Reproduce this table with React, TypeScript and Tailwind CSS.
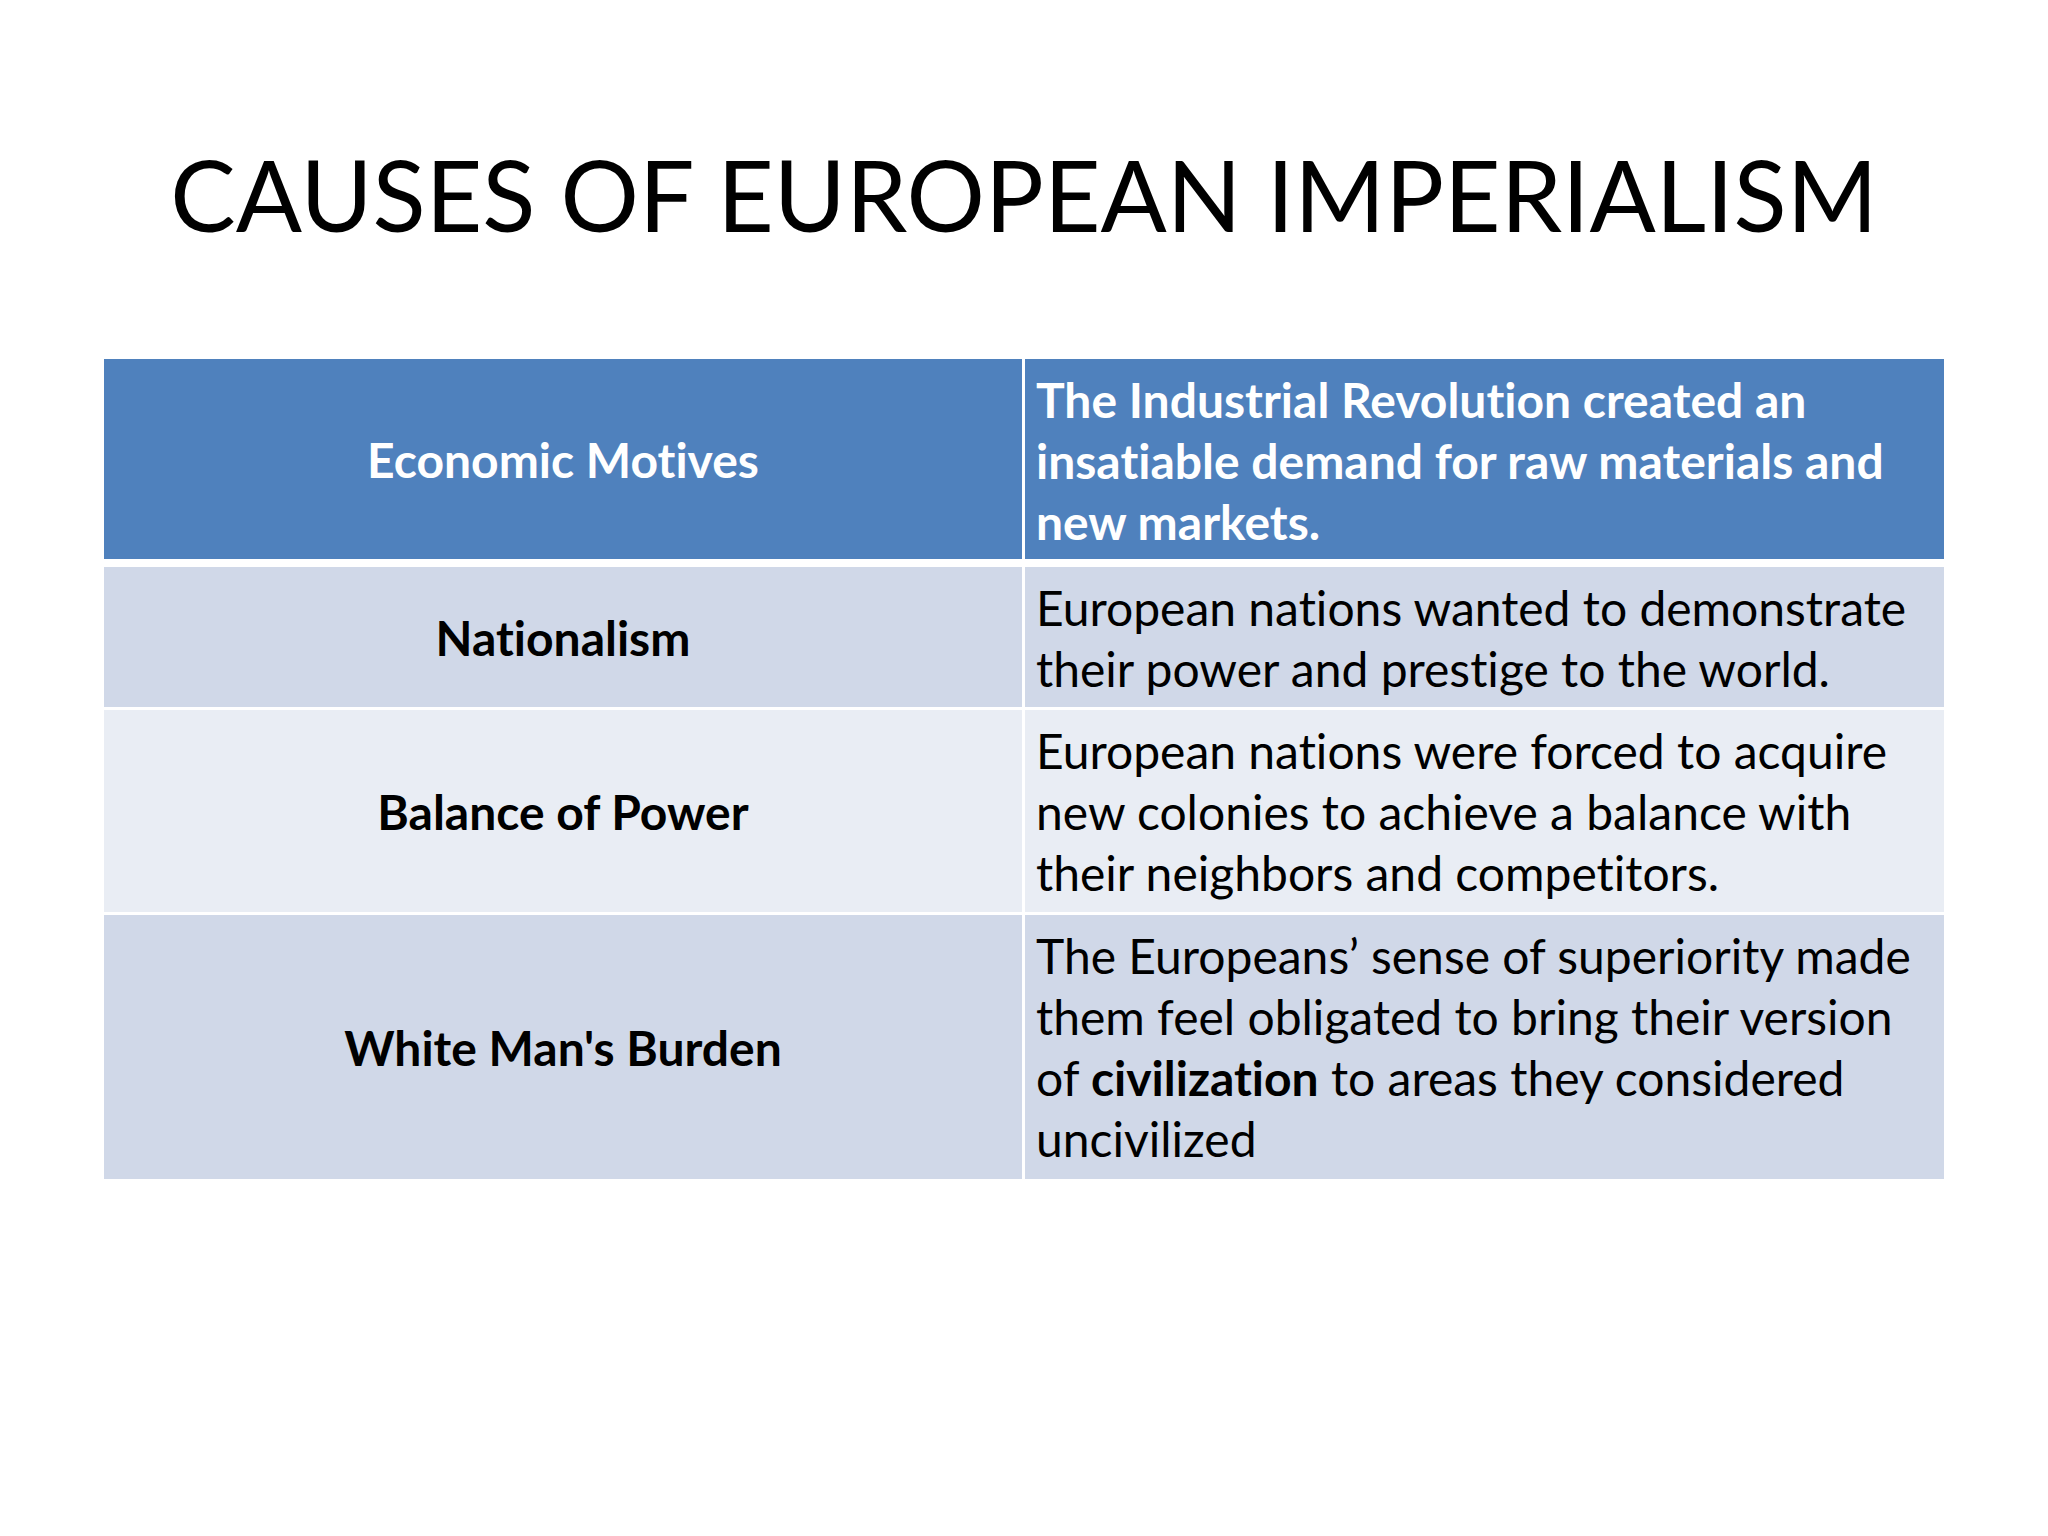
import React from "react";

export default function App() {
  const font = { fontFamily: "Lato, 'Open Sans', sans-serif" };
  return (
    <div className="w-[2048px] h-[1536px] bg-white flex flex-col items-center [font-variant-ligatures:none]" style={font}>
      <h1 className="mt-[127px] text-[98px] leading-[134px] font-normal text-black whitespace-nowrap">
        CAUSES OF EUROPEAN IMPERIALISM
      </h1>
      <div className="mt-[98px] w-[1840px] flex flex-col text-[48px] leading-[61px]">
        <div className="flex h-[200px] bg-[#4F81BD] text-white font-bold">
          <div className="w-[918px] flex items-center justify-center">Economic Motives</div>
          <div className="w-[3px] bg-white" />
          <div className="flex-1 pl-[11px] pt-[10px] whitespace-nowrap">
            The Industrial Revolution created an
            <br />
            insatiable demand for raw materials and
            <br />
            new markets.
          </div>
        </div>
        <div className="h-[8px] bg-white" />
        <div className="flex h-[140px] bg-[#D0D8E8] text-black">
          <div className="w-[918px] flex items-center justify-center font-bold">Nationalism</div>
          <div className="w-[3px] bg-white" />
          <div className="flex-1 pl-[11px] pt-[10px] whitespace-nowrap">
            European nations wanted to demonstrate
            <br />
            their power and prestige to the world.
          </div>
        </div>
        <div className="h-[3px] bg-white" />
        <div className="flex h-[202px] bg-[#E9EDF4] text-black">
          <div className="w-[918px] flex items-center justify-center font-bold">Balance of Power</div>
          <div className="w-[3px] bg-white" />
          <div className="flex-1 pl-[11px] pt-[10px] whitespace-nowrap">
            European nations were forced to acquire
            <br />
            new colonies to achieve a balance with
            <br />
            their neighbors and competitors.
          </div>
        </div>
        <div className="h-[3px] bg-white" />
        <div className="flex h-[264px] bg-[#D0D8E8] text-black">
          <div className="w-[918px] flex items-center justify-center font-bold">White Man's Burden</div>
          <div className="w-[3px] bg-white" />
          <div className="flex-1 pl-[11px] pt-[10px] whitespace-nowrap">
            The Europeans’ sense of superiority made
            <br />
            them feel obligated to bring their version
            <br />
            of <span className="font-bold">civilization</span> to areas they considered
            <br />
            uncivilized
          </div>
        </div>
      </div>
    </div>
  );
}
